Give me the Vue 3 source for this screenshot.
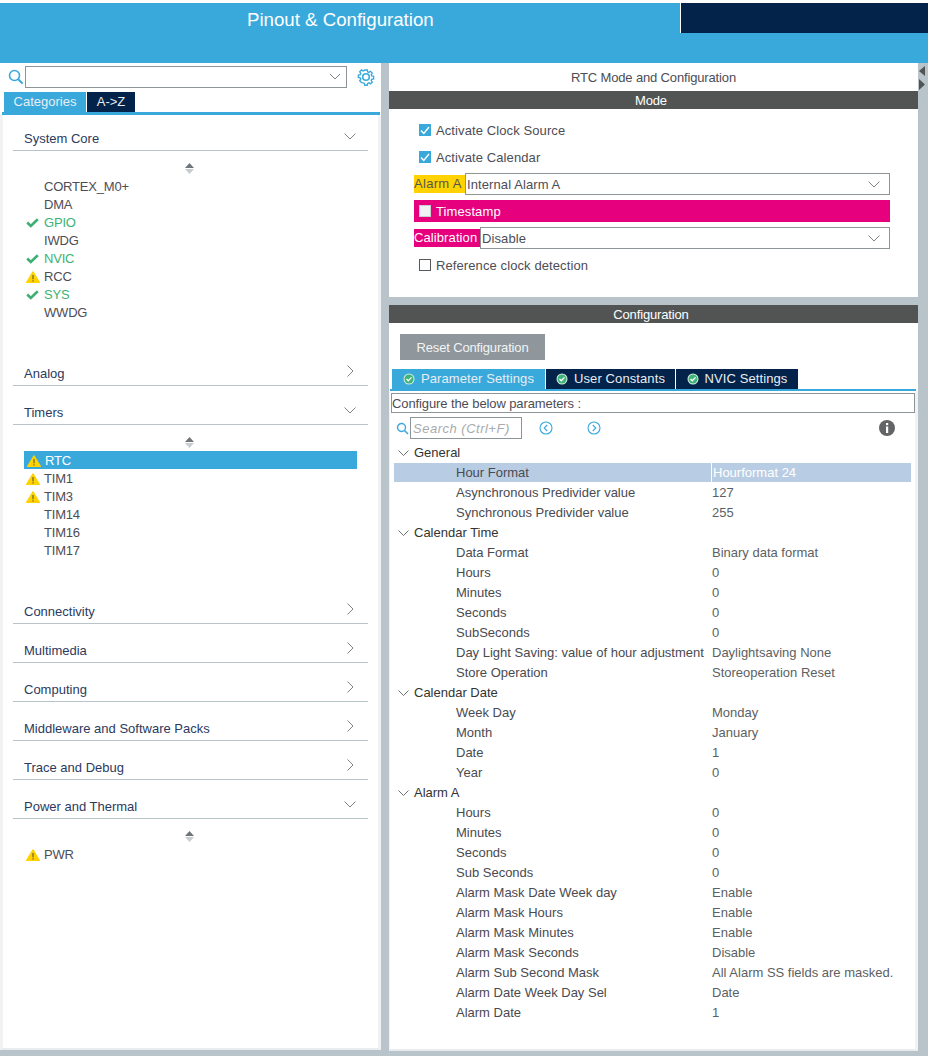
<script setup>
const cats = [
  { name: 'System Core', open: true, items: [
    { n: 'CORTEX_M0+' }, { n: 'DMA' }, { n: 'GPIO', s: 'ok' }, { n: 'IWDG' },
    { n: 'NVIC', s: 'ok' }, { n: 'RCC', s: 'warn' }, { n: 'SYS', s: 'ok' }, { n: 'WWDG' } ] },
  { name: 'Analog' },
  { name: 'Timers', open: true, items: [
    { n: 'RTC', s: 'warn', sel: true }, { n: 'TIM1', s: 'warn' }, { n: 'TIM3', s: 'warn' },
    { n: 'TIM14' }, { n: 'TIM16' }, { n: 'TIM17' } ] },
  { name: 'Connectivity' }, { name: 'Multimedia' }, { name: 'Computing' },
  { name: 'Middleware and Software Packs' }, { name: 'Trace and Debug' },
  { name: 'Power and Thermal', open: true, items: [{ n: 'PWR', s: 'warn' }] },
]
const groups = [
  { name: 'General', rows: [
    ['Hour Format', 'Hourformat 24', true], ['Asynchronous Predivider value', '127'], ['Synchronous Predivider value', '255'] ] },
  { name: 'Calendar Time', rows: [
    ['Data Format', 'Binary data format'], ['Hours', '0'], ['Minutes', '0'], ['Seconds', '0'], ['SubSeconds', '0'],
    ['Day Light Saving: value of hour adjustment', 'Daylightsaving None'], ['Store Operation', 'Storeoperation Reset'] ] },
  { name: 'Calendar Date', rows: [['Week Day', 'Monday'], ['Month', 'January'], ['Date', '1'], ['Year', '0']] },
  { name: 'Alarm A', rows: [
    ['Hours', '0'], ['Minutes', '0'], ['Seconds', '0'], ['Sub Seconds', '0'], ['Alarm Mask Date Week day', 'Enable'],
    ['Alarm Mask Hours', 'Enable'], ['Alarm Mask Minutes', 'Enable'], ['Alarm Mask Seconds', 'Disable'],
    ['Alarm Sub Second Mask', 'All Alarm SS fields are masked.'], ['Alarm Date Week Day Sel', 'Date'], ['Alarm Date', '1'] ] },
]
const tabs = [
  { t: 'Parameter Settings', on: true, w: 153 },
  { t: 'User Constants', w: 129 },
  { t: 'NVIC Settings', w: 122 },
]
</script>

<template>
  <div class="page">
    <header class="top">
      <div class="title">Pinout &amp; Configuration</div>
      <div class="navy"></div>
    </header>
    <div class="main">
      <aside class="left">
        <div class="search-row">
          <svg class="mag" width="16" height="16" viewBox="0 0 16 16"><circle cx="6.500" cy="6.500" r="5" fill="none" stroke="#39a9dc" stroke-width="1.600"/><path d="M10.200 10.200 14.600 14.600" stroke="#39a9dc" stroke-width="2"/></svg>
          <div class="combo">
            <svg class="chev" width="12" height="7" viewBox="0 0 12 7"><path d="M1 1l5 5 5-5" fill="none" stroke="#7d8488" stroke-width="1"/></svg>
          </div>
          <svg class="gear" width="18" height="18" viewBox="0 0 18 18"><circle cx="9" cy="9" r="3.300" fill="none" stroke="#39a9dc" stroke-width="1.600"/><path d="M7.600 1.500h2.800l.4 2.100 1.400.6 1.800-1.200 2 2-1.200 1.800.6 1.400 2.100.4v2.800l-2.100.4-.6 1.400 1.200 1.800-2 2-1.800-1.200-1.400.6-.4 2.100H7.600l-.4-2.100-1.400-.6L4 15.500l-2-2 1.200-1.800-.6-1.400L.5 9.900V7.100l2.100-.4.6-1.400L2 3.500l2-2 1.800 1.200 1.400-.6z" transform="translate(.9 .6) scale(.9)" fill="none" stroke="#39a9dc" stroke-width="1.500"/></svg>
        </div>
        <div class="cat-tabs">
          <div class="cat-tab on">Categories</div>
          <div class="cat-tab">A-&gt;Z</div>
        </div>
        <div class="cat-list">
          <section v-for="c in cats" :key="c.name" class="cat">
            <div class="cat-head">
              <span>{{ c.name }}</span>
              <svg v-if="c.open" class="ch-open" width="12" height="7" viewBox="0 0 12 7"><path d="M.5.500l5.500 5.500 5.500-5.500" fill="none" stroke="#7d8488"/></svg>
              <svg v-else class="ch-shut" width="7" height="12" viewBox="0 0 7 12"><path d="M.5.500l5.500 5.500-5.500 5.500" fill="none" stroke="#7d8488"/></svg>
            </div>
            <div v-if="c.open" class="cat-body">
              <svg class="sort" width="9" height="11" viewBox="0 0 9 11"><path d="M4.500 0 9 5H0z" fill="#6f7579"/><path d="M0 6h9l-4.500 5z" fill="#c8cdd0"/></svg>
              <div v-for="i in c.items" :key="i.n" class="item" :class="{ sel: i.sel, ok: i.s === 'ok' }">
                <span class="ico">
                  <svg v-if="i.s === 'ok'" width="13" height="10" viewBox="0 0 13 10"><path d="M1.200 4.500 4.800 8 11.800 1.300" fill="none" stroke="#3fae74" stroke-width="2.600"/></svg>
                  <svg v-if="i.s === 'warn'" width="14" height="12" viewBox="0 0 14 12"><path d="M7 .8 13.400 11.400H.6z" fill="#ffd200" stroke="#ffd200" stroke-width="1.200" stroke-linejoin="round"/><path d="M6.500 4h1v4.300h-1zM6.500 9.200h1v1.200h-1z" fill="#4a4a4a"/></svg>
                </span>
                <span>{{ i.n }}</span>
              </div>
            </div>
          </section>
        </div>
      </aside>

      <div class="right">
        <div class="mode-panel">
          <div class="ptitle">RTC Mode and Configuration</div>
          <div class="bar">Mode</div>
          <div class="mode-body">
            <label class="chk"><span class="box on"><svg width="10" height="9" viewBox="0 0 10 9"><path d="M1 4.500 3.800 7.500 9 1" fill="none" stroke="#fff" stroke-width="1.400"/></svg></span>Activate Clock Source</label>
            <label class="chk"><span class="box on"><svg width="10" height="9" viewBox="0 0 10 9"><path d="M1 4.500 3.800 7.500 9 1" fill="none" stroke="#fff" stroke-width="1.400"/></svg></span>Activate Calendar</label>
            <div class="sel-row">
              <span class="lab yellow">Alarm A</span>
              <div class="select">Internal Alarm A<svg width="12" height="7" viewBox="0 0 12 7"><path d="M.5.500l5.500 5.500 5.500-5.500" fill="none" stroke="#7d8488"/></svg></div>
            </div>
            <div class="stamp"><span class="box pale"></span>Timestamp</div>
            <div class="sel-row">
              <span class="lab pink">Calibration</span>
              <div class="select">Disable<svg width="12" height="7" viewBox="0 0 12 7"><path d="M.5.500l5.500 5.500 5.500-5.500" fill="none" stroke="#7d8488"/></svg></div>
            </div>
            <label class="chk"><span class="box"></span>Reference clock detection</label>
          </div>
        </div>

        <div class="conf-panel">
          <div class="bar">Configuration</div>
          <button class="reset">Reset Configuration</button>
          <div class="ctabs">
            <div v-for="t in tabs" :key="t.t" class="ctab" :class="{ on: t.on }" :style="{ width: t.w + 'px' }">
              <svg width="12" height="12" viewBox="0 0 12 12"><circle cx="6" cy="6" r="5.500" fill="#d6efe0"/><circle cx="6" cy="6" r="4.500" fill="#3fb37a"/><path d="M3.500 6 5.300 7.800 8.500 4.400" fill="none" stroke="#fff" stroke-width="1.300"/></svg>
              {{ t.t }}
            </div>
          </div>
          <div class="conf-body">
            <div class="hint">Configure the below parameters :</div>
            <div class="tools">
              <svg width="13" height="13" viewBox="0 0 13 13"><circle cx="5.500" cy="5.500" r="4" fill="none" stroke="#39a9dc" stroke-width="1.400"/><path d="M8.500 8.500 12 12" stroke="#39a9dc" stroke-width="1.600"/></svg>
              <div class="find">Search (Ctrl+F)</div>
              <svg class="nav" width="14" height="14" viewBox="0 0 14 14"><circle cx="7" cy="7" r="6" fill="none" stroke="#39a9dc" stroke-width="1.100"/><path d="M8.200 4 5.200 7l3 3" fill="none" stroke="#39a9dc" stroke-width="1.100"/></svg>
              <svg class="nav2" width="14" height="14" viewBox="0 0 14 14"><circle cx="7" cy="7" r="6" fill="none" stroke="#39a9dc" stroke-width="1.100"/><path d="M5.800 4l3 3-3 3" fill="none" stroke="#39a9dc" stroke-width="1.100"/></svg>
              <svg class="info" width="16" height="16" viewBox="0 0 16 16"><circle cx="8" cy="8" r="8" fill="#636466"/><rect x="7" y="3" width="2.200" height="2.200" fill="#fff"/><rect x="7" y="6.500" width="2.200" height="6.500" fill="#fff"/></svg>
            </div>
            <div class="tree">
              <template v-for="g in groups" :key="g.name">
                <div class="ghead">
                  <svg width="11" height="6" viewBox="0 0 11 6"><path d="M.5.500l5 5 5-5" fill="none" stroke="#6b7175"/></svg>
                  <span>{{ g.name }}</span>
                </div>
                <div v-for="r in g.rows" :key="g.name + r[0]" class="row" :class="{ hi: r[2] }">
                  <span class="k">{{ r[0] }}</span>
                  <span class="v">{{ r[1] }}</span>
                </div>
              </template>
            </div>
          </div>
        </div>
      </div>

      <div class="splitter">
        <svg class="arrows" width="8" height="32" viewBox="0 0 8 32"><path d="M7 3v10L1 8z" fill="#525454"/><path d="M1 16v11l6-5.500z" fill="#525454"/></svg>
      </div>
    </div>
  </div>
</template>

<style>
html, body { margin: 0; background: #fff; }
</style>

<style scoped>
.page {
  width: 928px;
  height: 1056px;
  overflow: hidden;
  display: flex;
  flex-direction: column;
  background: #b9c4ca;
  font-family: "Liberation Sans", Arial, sans-serif;
  font-size: 13px;
  letter-spacing: 0;
  color: #4d4d55;
}
.top {
  height: 63px;
  flex: none;
  box-sizing: border-box;
  padding: 3px 0 0 1px;
  background: linear-gradient(#fff 3px, #39a9dc 3px);
  display: flex;
  align-items: flex-start;
}
.title {
  width: 679px;
  padding-left: 246px;
  box-sizing: border-box;
  height: 30px;
  line-height: 33px;
  color: #fff;
  font-size: 18.670px;
}
.navy { flex: 1; height: 30px; background: #03234b; border-left: 1px solid #fff; }
.main { flex: 1; display: flex; min-height: 0; }
.left {
  width: 381px;
  flex: none;
  height: 987px;
  background: #fff;
  display: flex;
  flex-direction: column;
}
.search-row { display: flex; align-items: center; height: 27px; padding-left: 8px; }
.mag { margin-right: 1px; }
.combo {
  width: 322px;
  height: 22px;
  box-sizing: border-box;
  border: 1px solid #8e9599;
  display: flex;
  align-items: center;
  justify-content: flex-end;
  padding-right: 5px;
}
.gear { margin-left: 10px; }
.cat-tabs { display: flex; height: 20px; margin: 2px 1px 0 2px; padding-left: 2px; border-bottom: 3px solid #39a9dc; gap: 1px; }
.cat-tab { background: #03234b; color: #e8edf2; width: 48px; text-align: center; line-height: 19px; }
.cat-tab.on { background: #39a9dc; width: 82px; }
.cat-list {
  flex: 1;
  padding: 0 10px;
  border-left: 3px solid #f0f2f3;
  border-right: 3px solid #f0f2f3;
  border-bottom: 2px solid #e8ecee;
}
.cat-head {
  height: 36px;
  box-sizing: border-box;
  padding: 12px 12px 0 11px;
  display: flex;
  align-items: center;
  justify-content: space-between;
  border-bottom: 1px solid #b9c4ca;
  color: #2b3a5e;
  width: 355px;
}
.cat + .cat .cat-head { height: 39px; padding-top: 15px; }
.ch-open { margin-bottom: 4px; }
.ch-shut { margin-bottom: 6px; margin-right: 2px; }
.cat-body { padding: 12px 0 26px; }
.sort { display: block; margin: 0 0 3px 172px; }
.item { height: 18px; display: flex; align-items: center; margin-left: 11px; padding-top: 1px; color: #4d4d55; width: 333px; box-sizing: border-box; letter-spacing: -.2px; }
.ico { width: 20px; display: flex; justify-content: flex-start; align-items: center; padding-left: 2px; box-sizing: border-box; flex: none; }
.item.ok { color: #3cb371; }
.item.sel { background: #39a9dc; color: #fff; padding-left: 1px; }
.right { width: 529px; flex: none; margin-left: 8px; display: flex; flex-direction: column; }
.mode-panel { height: 234px; flex: none; background: #fff; }
.ptitle { height: 28px; line-height: 29px; text-align: center; color: #4d4d55; letter-spacing: -.15px; }
.bar { height: 18px; line-height: 19px; text-align: center; background: #525454; color: #fff; letter-spacing: -.15px; padding-right: 5px; }
.mode-body { padding: 8px 28px 0 25px; display: flex; flex-direction: column; }
.chk { height: 27px; display: flex; align-items: center; padding-left: 5px; letter-spacing: .1px; }
.box {
  width: 12px; height: 12px; flex: none; margin-right: 5px; margin-top: -1px;
  border: 1px solid #55595c; box-sizing: border-box; background: #fff;
  display: flex; align-items: center; justify-content: center;
}
.box.on { background: #39a9dc; border-color: #39a9dc; }
.box.pale { background: #f0f2f3; border-color: #c8cdd0; margin-top: 0; }
.sel-row { height: 27px; display: flex; align-items: flex-start; padding-top: 2px; box-sizing: border-box; letter-spacing: .1px; }
.lab { height: 18px; line-height: 18px; margin-top: 2px; flex: none; }
.yellow { background: #ffd200; width: 51px; color: #55574f; letter-spacing: .3px; }
.pink { background: #e6007e; width: 66px; color: #fff; }
.select {
  flex: 1; height: 22px; box-sizing: border-box; border: 1px solid #8e9599; padding: 0 9px 0 1px;
  display: flex; align-items: center; justify-content: space-between; background: #fff;
}
.stamp { height: 22px; margin: 2px 0 3px; background: #e6007e; color: #fff; display: flex; align-items: center; padding-left: 5px; letter-spacing: .1px; }
.conf-panel { margin-top: 8px; height: 746px; background: #fff; display: flex; flex-direction: column; }
.reset {
  display: block; width: 145px; height: 26px; margin: 11px 0 0 11px; border: 0; padding: 1px 0 0;
  background: #8f979c; color: #f2f4f5; font: inherit; letter-spacing: -.15px; text-align: center;
}
.ctabs { display: flex; margin: 9px 0 0 1px; padding-left: 2px; height: 20px; gap: 1px; border-bottom: 2px solid #39a9dc; width: 524px; }
.ctab { background: #03234b; color: #e8edf2; display: flex; align-items: center; justify-content: center; gap: 6px; box-sizing: border-box; letter-spacing: .1px; height: 20px; flex: none; padding-bottom: 1px; }
.ctab.on { background: #39a9dc; }
.conf-body { flex: 1; border-left: 1px solid #f0f2f3; border-right: 3px solid #f0f2f3; border-bottom: 2px solid #e8ecee; }
.hint { height: 20px; line-height: 19px; box-sizing: border-box; border: 1px solid #8e9599; margin: 2px 0 0 1px; letter-spacing: -.1px; }
.tools { display: flex; align-items: center; height: 22px; margin-top: 4px; padding-left: 6px; }
.find { width: 112px; height: 22px; box-sizing: border-box; border: 1px solid #8e9599; margin-left: 1px; padding-left: 2px; line-height: 21px; font-style: italic; color: #a7abae; letter-spacing: .5px; }
.nav { margin-left: 17px; }
.nav2 { margin-left: 34px; }
.info { margin-left: 278px; }
.tree { padding: 3px 4px 0 4px; }
.ghead { height: 20px; box-sizing: border-box; padding-top: 1px; display: flex; align-items: center; gap: 5px; color: #333; padding-left: 4px; }
.row { height: 20px; box-sizing: border-box; padding-top: 1px; display: flex; align-items: center; color: #4a4a50; }
.k { width: 317px; padding-left: 62px; box-sizing: border-box; flex: none; white-space: nowrap; }
.v { padding-left: 1px; color: #5c5f63; white-space: nowrap; }
.row.hi { background: #b8cde3; height: 19px; margin-top: 1px; padding-top: 0; }
.row.hi .v { color: #fff; border-left: 1px solid #fff; height: 19px; line-height: 19px; }
.splitter { flex: 1; position: relative; }
.arrows { position: absolute; left: 0; top: 0; }
</style>
